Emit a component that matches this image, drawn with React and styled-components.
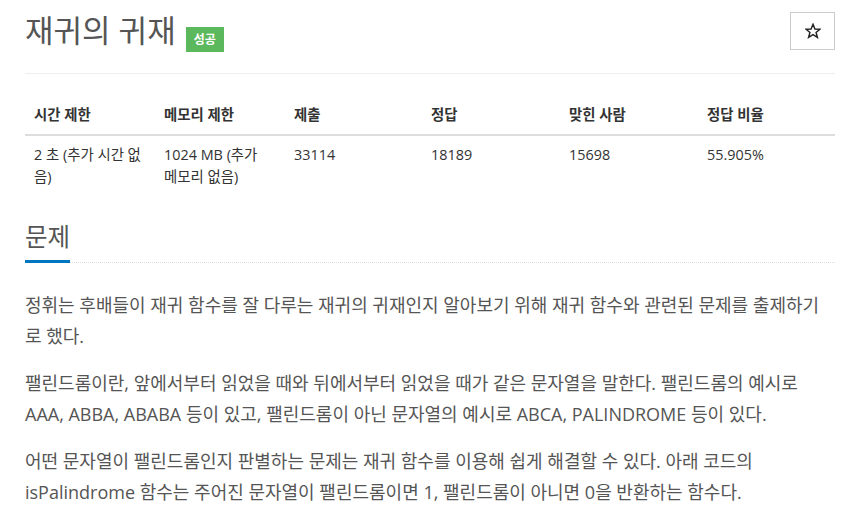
import styled, { createGlobalStyle } from 'styled-components';

const GlobalStyle = createGlobalStyle`
  body {
    margin: 0;
    background: #ffffff;
    font-family: "Open Sans", "Noto Sans CJK KR", sans-serif;
    color: #333;
  }
`;

const Page = styled.div`
  padding: 0 6px 0 25px;
  width: 810px;
`;

const TitleRow = styled.div`
  display: flex;
  justify-content: space-between;
  align-items: flex-start;
  padding-top: 12px;
  height: 61px;
  border-bottom: 1px solid #eee;
`;

const TitleWrap = styled.div`
  display: flex;
  align-items: flex-start;
  gap: 10px;
`;

const Title = styled.h1`
  margin: 0;
  font-size: 31px;
  font-weight: 400;
  color: #555;
  line-height: 36px;
`;

const Badge = styled.span`
  background: #5cb85c;
  color: #fff;
  font-size: 12px;
  font-weight: 700;
  padding: 0 8px;
  height: 25px;
  line-height: 25px;
  margin-top: 15px;
`;

const StarButton = styled.button`
  width: 45px;
  height: 38px;
  border: 1px solid #ccc;
  background: #fff;
  display: flex;
  align-items: center;
  justify-content: center;
  padding: 0;
  cursor: pointer;
`;

const Table = styled.div`
  margin-top: 22px;
  display: grid;
  grid-template-columns: 130px 130px 137px 138px 138px 137px;
`;

const HeadCell = styled.div`
  padding: 8px 9px;
  font-size: 14.4px;
  font-weight: 700;
  color: #333;
  line-height: 22px;
  border-bottom: 2px solid #ddd;
`;

const Cell = styled.div`
  padding: 8px 11px 8px 9px;
  font-size: 14.4px;
  color: #333;
  line-height: 22px;
`;

const SectionHead = styled.div`
  margin-top: 22px;
  border-bottom: 1px dotted #ddd;
  display: flex;
`;

const SectionTitle = styled.h2`
  margin: 0;
  font-size: 24.5px;
  font-weight: 400;
  color: #555;
  line-height: 38px;
  padding-bottom: 4px;
  border-bottom: 3px solid #0076c0;
  margin-bottom: -1px;
`;

const Desc = styled.div`
  padding-top: 27px;
`;

const Para = styled.p`
  margin: 0 0 16px;
  font-size: 18px;
  line-height: 31px;
  color: #555;
`;

const StarIcon = () => (
  <svg width="16" height="16" viewBox="0 0 24 24" fill="none" stroke="#222" strokeWidth="2.2" strokeLinejoin="miter">
    <polygon points="12,2 14.9,9 22.5,9.3 16.6,14.1 18.6,21.5 12,17.3 5.4,21.5 7.4,14.1 1.5,9.3 9.1,9" />
  </svg>
);

const heads = ['시간 제한', '메모리 제한', '제출', '정답', '맞힌 사람', '정답 비율'];
const values = ['2 초 (추가 시간 없음)', '1024 MB (추가 메모리 없음)', '33114', '18189', '15698', '55.905%'];

export default function App() {
  return (
    <>
      <GlobalStyle />
      <Page>
        <TitleRow>
          <TitleWrap>
            <Title>재귀의 귀재</Title>
            <Badge>성공</Badge>
          </TitleWrap>
          <StarButton>
            <StarIcon />
          </StarButton>
        </TitleRow>
        <Table>
          {heads.map(h => (
            <HeadCell key={h}>{h}</HeadCell>
          ))}
          {values.map(v => (
            <Cell key={v}>{v}</Cell>
          ))}
        </Table>
        <SectionHead>
          <SectionTitle>문제</SectionTitle>
        </SectionHead>
        <Desc>
          <Para>
            정휘는 후배들이 재귀 함수를 잘 다루는 재귀의 귀재인지 알아보기 위해 재귀 함수와 관련된 문제를 출제하기로 했다.
          </Para>
          <Para>
            팰린드롬이란, 앞에서부터 읽었을 때와 뒤에서부터 읽었을 때가 같은 문자열을 말한다. 팰린드롬의 예시로 AAA, ABBA, ABABA 등이 있고, 팰린드롬이 아닌 문자열의 예시로 ABCA, PALINDROME 등이 있다.
          </Para>
          <Para>
            어떤 문자열이 팰린드롬인지 판별하는 문제는 재귀 함수를 이용해 쉽게 해결할 수 있다. 아래 코드의 isPalindrome 함수는 주어진 문자열이 팰린드롬이면 1, 팰린드롬이 아니면 0을 반환하는 함수다.
          </Para>
        </Desc>
      </Page>
    </>
  );
}
